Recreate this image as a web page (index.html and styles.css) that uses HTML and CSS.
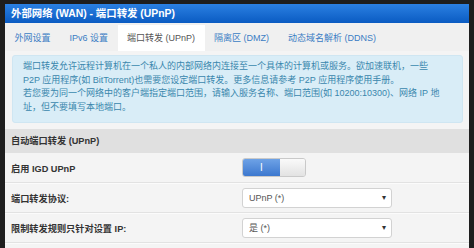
FILE: index.html
```html
<!DOCTYPE html>
<html>
  <head>
    <meta charset="utf-8">
    <title>外部网络 (WAN) - 端口转发 (UPnP)</title>
    <link rel="stylesheet" href="styles.css">
  </head>
  <body>
    <div class="panel">
      <div class="panel-title">外部网络 (WAN) - 端口转发 (UPnP)</div>
      <div class="tabs">
        <div class="tab">外网设置</div>
        <div class="tab">IPv6 设置</div>
        <div class="tab active">端口转发 (UPnP)</div>
        <div class="tab">隔离区 (DMZ)</div>
        <div class="tab">动态域名解析 (DDNS)</div>
      </div>
      <div class="panel-body">
        <div class="info">
          端口转发允许远程计算机在一个私人的内部网络内连接至一个具体的计算机或服务。欲加速联机，一些<br>
          P2P 应用程序(如 BitTorrent)也需要您设定端口转发。更多信息请参考 P2P 应用程序使用手册。<br>
          若您要为同一个网络中的客户端指定端口范围，请输入服务名称、端口范围(如 10200:10300)、网络 IP 地<br>
          址，但不要填写本地端口。
        </div>
      </div>
      <div class="section-head">自动端口转发 (UPnP)</div>
      <div class="row">
        <div class="label">启用 IGD UPnP</div>
        <div class="toggle">
          <span class="toggle-on">I</span>
          <span class="toggle-off"></span>
        </div>
      </div>
      <div class="row">
        <div class="label">端口转发协议:</div>
        <div class="select">UPnP (*)<span class="caret">▾</span></div>
      </div>
      <div class="row">
        <div class="label">限制转发规则只针对设置 IP:</div>
        <div class="select">是 (*)<span class="caret">▾</span></div>
      </div>
    </div>
  </body>
</html>
```

FILE: styles.css
```css
body {
  margin: 0;
  padding: 4px 5px 0 5px;
  background-color: #1e1e1e;
  font-family: "Liberation Sans", "Noto Sans CJK SC", sans-serif;
  font-size: 9px;
  color: #333;
}

.panel {
  background-color: #f4f4f4;
  height: 244px;
  overflow: hidden;
}

.panel-title {
  height: 19px;
  line-height: 19px;
  padding-left: 6px;
  background: linear-gradient(#2b80e2, #0a5bc2);
  color: #fff;
  font-size: 10.4px;
  font-weight: bold;
}

.tabs {
  display: flex;
  padding-top: 2px;
  background-color: #f0f0f0;
}

.tab {
  height: 26px;
  line-height: 26px;
  padding: 0 9.5px;
  color: #3b7dc4;
  white-space: nowrap;
}

.tab.active {
  background-color: #fff;
  color: #555;
}

.panel-body {
  padding: 4px 6px 6px 7px;
}

.info {
  padding: 4px 10px 8px 10px;
  background-color: #d9edf7;
  border: 1px solid #cfe6f2;
  border-radius: 3px;
  color: #3a87ad;
  line-height: 13.6px;
  white-space: nowrap;
}

.section-head {
  height: 24px;
  line-height: 24px;
  padding-left: 6px;
  background-color: #e0e0e0;
  font-weight: bold;
  font-size: 9.2px;
}

.row {
  display: flex;
  align-items: center;
  height: 29px;
  padding-left: 6px;
  border-bottom: 1px solid #e2e2e2;
  box-shadow: 0 1px 0 #fbfbfb;
}

.label {
  width: 231px;
  font-weight: bold;
  font-size: 9.2px;
}

.toggle {
  display: flex;
  width: 62px;
  height: 17px;
  border: 1px solid #c9c9c9;
  border-radius: 3px;
  overflow: hidden;
}

.toggle-on {
  width: 37px;
  background: linear-gradient(#6ea2e6, #3c78cf);
  color: #fff;
  text-align: center;
  line-height: 17px;
  font-size: 10px;
}

.toggle-off {
  flex: 1;
  background: linear-gradient(#fafafa, #e2e2e2);
}

.select {
  position: relative;
  width: 142px;
  height: 18px;
  line-height: 18px;
  padding-left: 6px;
  background-color: #fff;
  border: 1px solid #d2d2d2;
  border-radius: 3px;
  color: #555;
}

.caret {
  position: absolute;
  right: 5px;
  top: 0;
  color: #333;
  font-size: 8px;
}
```
